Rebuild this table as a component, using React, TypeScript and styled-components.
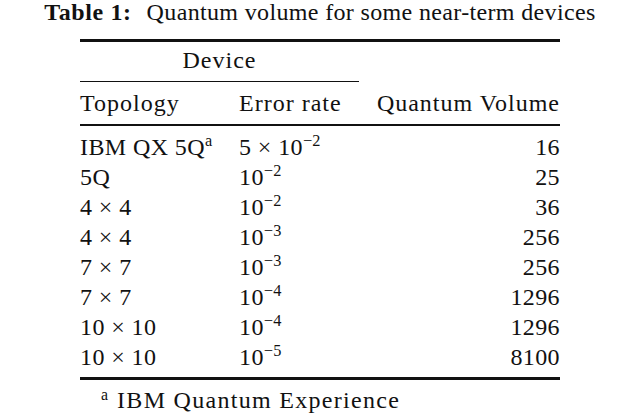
import React from "react";
import styled, { createGlobalStyle } from "styled-components";

const Global = createGlobalStyle`
  html, body { margin: 0; padding: 0; background: #ffffff; }
  body { font-family: "Liberation Serif", "DejaVu Serif", serif; color: #111; }
`;

const Page = styled.div`
  width: 640px;
  height: 418px;
  overflow: hidden;
  background: #fff;
  font-family: "Liberation Serif", "DejaVu Serif", serif;
`;

const Caption = styled.div`
  width: 640px;
  text-align: center;
  font-size: 24px;
  line-height: 24px;
  letter-spacing: 0.35px;
  white-space: nowrap;
`;

const CaptionLabel = styled.span`
  font-weight: bold;
  letter-spacing: 0.6px;
  margin-right: 15px;
`;

const Table = styled.div`
  margin: 15px 0 0 80px;
  width: 480px;
  font-size: 24px;
  letter-spacing: 0.4px;
`;

const Rule = styled.div<{ $weight: number; $gapTop?: number; $width?: number }>`
  height: ${(p) => p.$weight}px;
  width: ${(p) => (p.$width ? `${p.$width}px` : "100%")};
  background: #111;
  margin-top: ${(p) => p.$gapTop ?? 0}px;
`;

const Row = styled.div<{ $padTop?: number; $spread?: number; $pitch?: number }>`
  display: grid;
  grid-template-columns: 159px 120px 1fr;
  line-height: ${(p) => p.$pitch ?? 29.7}px;
  height: ${(p) => p.$pitch ?? 29.7}px;
  padding-top: ${(p) => p.$padTop ?? 0}px;
  letter-spacing: ${(p) => p.$spread ?? 0.4}px;
  white-space: nowrap;
`;

const GroupHead = styled.div`
  grid-column: 1 / 3;
  text-align: center;
`;

const Cell = styled.div<{ $align?: "left" | "right" }>`
  text-align: ${(p) => p.$align ?? "left"};
`;

const Body = styled.div`
  padding-top: 6px;
`;

const Sup = styled.span`
  font-size: 0.68em;
  vertical-align: 9px;
  line-height: 0;
  letter-spacing: 0.2px;
`;

const Footnote = styled.div`
  margin-top: 8px;
  padding-left: 21px;
  font-size: 24px;
  line-height: 24px;
  letter-spacing: 1.3px;
  white-space: nowrap;
`;

const FootMark = styled.span`
  font-size: 0.66em;
  vertical-align: 8px;
  line-height: 0;
  letter-spacing: 0;
  margin-right: 9px;
`;

type Entry = { topo: React.ReactNode; base: string; exp: string; qv: string };

const rows: Entry[] = [
  { topo: <>IBM QX 5Q<Sup>a</Sup></>, base: "5 × 10", exp: "−2", qv: "16" },
  { topo: "5Q", base: "10", exp: "−2", qv: "25" },
  { topo: "4 × 4", base: "10", exp: "−2", qv: "36" },
  { topo: "4 × 4", base: "10", exp: "−3", qv: "256" },
  { topo: "7 × 7", base: "10", exp: "−3", qv: "256" },
  { topo: "7 × 7", base: "10", exp: "−4", qv: "1296" },
  { topo: "10 × 10", base: "10", exp: "−4", qv: "1296" },
  { topo: "10 × 10", base: "10", exp: "−5", qv: "8100" },
];

export default function App() {
  return (
    <Page>
      <Global />
      <Caption>
        <CaptionLabel>Table 1:</CaptionLabel>Quantum volume for some near-term devices
      </Caption>
      <Table>
        <Rule $weight={3} />
        <Row $padTop={4} $spread={1}>
          <GroupHead>Device</GroupHead>
        </Row>
        <Rule $weight={1.3} $gapTop={5} $width={279} />
        <Row $padTop={7} $spread={1}>
          <Cell>Topology</Cell>
          <Cell>Error rate</Cell>
          <Cell $align="right">Quantum Volume</Cell>
        </Row>
        <Rule $weight={2} $gapTop={5} />
        <Body>
          {rows.map((r, i) => (
            <Row key={i} $pitch={30}>
              <Cell>{r.topo}</Cell>
              <Cell>
                {r.base}
                <Sup>{r.exp}</Sup>
              </Cell>
              <Cell $align="right">{r.qv}</Cell>
            </Row>
          ))}
        </Body>
        <Rule $weight={3} $gapTop={5.5} />
        <Footnote>
          <FootMark>a</FootMark>IBM Quantum Experience
        </Footnote>
      </Table>
    </Page>
  );
}
